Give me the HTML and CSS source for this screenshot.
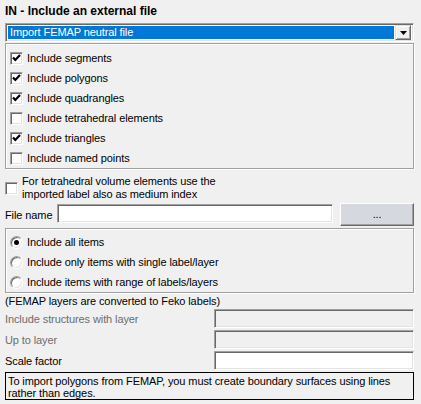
FILE: index.html
```html
<!DOCTYPE html>
<html>
<head>
<meta charset="utf-8">
<link rel="stylesheet" href="styles.css">
</head>
<body>
<div class="page">
  <div class="title">IN - Include an external file</div>
  <div class="combo">
    <div class="combo-value">Import FEMAP neutral file</div>
    <div class="combo-btn"><svg width="7" height="4" viewBox="0 0 7 4"><path d="M0 0h7L3.5 4z" fill="#000"/></svg></div>
  </div>
  <div class="group group-checks">
    <div class="row"><span class="cb"><svg width="11" height="11" viewBox="0 0 11 11"><path d="M2 4.5L4.3 7L9 2" fill="none" stroke="#000" stroke-width="2.2"/></svg></span><span>Include segments</span></div>
    <div class="row"><span class="cb"><svg width="11" height="11" viewBox="0 0 11 11"><path d="M2 4.5L4.3 7L9 2" fill="none" stroke="#000" stroke-width="2.2"/></svg></span><span>Include polygons</span></div>
    <div class="row"><span class="cb"><svg width="11" height="11" viewBox="0 0 11 11"><path d="M2 4.5L4.3 7L9 2" fill="none" stroke="#000" stroke-width="2.2"/></svg></span><span>Include quadrangles</span></div>
    <div class="row"><span class="cb"></span><span>Include tetrahedral elements</span></div>
    <div class="row"><span class="cb"><svg width="11" height="11" viewBox="0 0 11 11"><path d="M2 4.5L4.3 7L9 2" fill="none" stroke="#000" stroke-width="2.2"/></svg></span><span>Include triangles</span></div>
    <div class="row"><span class="cb"></span><span>Include named points</span></div>
  </div>
  <div class="tetra">
    <span class="cb"></span>
    <span class="tetra-text">For tetrahedral volume elements use the<br>imported label also as medium index</span>
  </div>
  <div class="file-row">
    <span class="file-label">File name</span>
    <span class="field file-input"></span>
    <span class="btn">...</span>
  </div>
  <div class="group group-radios">
    <div class="row"><span class="radio on"></span><span>Include all items</span></div>
    <div class="row"><span class="radio"></span><span>Include only items with single label/layer</span></div>
    <div class="row"><span class="radio"></span><span>Include items with range of labels/layers</span></div>
  </div>
  <div class="hint">(FEMAP layers are converted to Feko labels)</div>
  <div class="form-row disabled"><span class="lbl">Include structures with layer</span><span class="field"></span></div>
  <div class="form-row disabled"><span class="lbl">Up to layer</span><span class="field"></span></div>
  <div class="form-row"><span class="lbl">Scale factor</span><span class="field white"></span></div>
  <div class="note">To import polygons from FEMAP, you must create boundary surfaces using lines<br>rather than edges.</div>
</div>
</body>
</html>
```
FILE: styles.css
```css
html, body {
  margin: 0;
  padding: 0;
}
body {
  width: 421px;
  height: 404px;
  overflow: hidden;
  background: #f0f0f0;
  font-family: "Liberation Sans", Arial, sans-serif;
  font-size: 11px;
  letter-spacing: -0.1px;
  color: #000;
}
.page {
  padding: 5px 7px 0 5px;
}
.title {
  font-weight: bold;
  font-size: 12px;
  letter-spacing: 0;
  height: 13px;
  line-height: 13px;
  margin-bottom: 5px;
}
.combo {
  box-sizing: border-box;
  height: 19px;
  display: flex;
  background: #fff;
  border: 1px solid;
  border-color: #a0a0a0 #fff #fff #a0a0a0;
  box-shadow: inset 1px 1px 0 #696969, inset -1px -1px 0 #e3e3e3;
  padding: 2px 2px 2px 2px;
}
.combo-value {
  flex: 1;
  background: #0078d7;
  color: #fff;
  line-height: 13px;
  padding-left: 2px;
  margin-right: 1px;
}
.combo-btn {
  box-sizing: border-box;
  width: 16px;
  margin-top: -1px;
  margin-bottom: -1px;
  background: #f0f0f0;
  border: 1px solid;
  border-color: #e3e3e3 #696969 #696969 #e3e3e3;
  box-shadow: inset 1px 1px 0 #fff, inset -1px -1px 0 #a0a0a0;
  display: flex;
  align-items: center;
  justify-content: center;
}
.group {
  border: 1px solid #a0a0a0;
  box-shadow: inset 1px 1px 0 #fff, 1px 1px 0 #fff;
  margin-top: 1px;
}
.group-checks {
  padding: 4px 0 0 4px;
}
.row {
  height: 20px;
  display: flex;
  align-items: center;
  gap: 4px;
}
.cb {
  box-sizing: border-box;
  width: 13px;
  height: 13px;
  flex: none;
  background: #fff;
  border: 1px solid;
  border-color: #a0a0a0 #fff #fff #a0a0a0;
  box-shadow: inset 1px 1px 0 #696969, inset -1px -1px 0 #e3e3e3;
  display: flex;
  align-items: center;
  justify-content: center;
}
.cb svg {
  display: block;
}
.tetra {
  margin-top: 6px;
  display: flex;
  align-items: center;
  gap: 4px;
  line-height: 13px;
}
.file-row {
  margin-top: 2px;
  height: 23px;
  display: flex;
  align-items: center;
}
.file-label {
  width: 52px;
}
.field {
  box-sizing: border-box;
  display: block;
  height: 19px;
  background: #f0f0f0;
  border: 1px solid;
  border-color: #a0a0a0 #fff #fff #a0a0a0;
  box-shadow: inset 1px 1px 0 #696969, inset -1px -1px 0 #e3e3e3;
}
.field.white {
  background: #fff;
}
.file-input {
  width: 277px;
  background: #fff;
  margin-top: -3px;
}
.btn {
  box-sizing: border-box;
  margin-left: 7px;
  width: 74px;
  height: 23px;
  background: #d6d8e0;
  border: 1px solid;
  border-color: #fff #696969 #696969 #fff;
  box-shadow: inset -1px -1px 0 #a0a0a0;
  display: flex;
  align-items: center;
  justify-content: center;
  line-height: 13px;
}
.group-radios {
  margin-top: 2px;
  padding: 3px 0 0 4px;
}
.radio {
  box-sizing: border-box;
  position: relative;
  width: 13px;
  height: 13px;
  flex: none;
  border-radius: 50%;
  background: #fff;
  border: 1px solid;
  border-color: #a0a0a0 #fff #fff #a0a0a0;
  box-shadow: inset 1px 1px 0 #696969, inset -1px -1px 0 #e3e3e3;
}
.radio.on::after {
  content: "";
  position: absolute;
  left: 3px;
  top: 3px;
  width: 5px;
  height: 5px;
  border-radius: 50%;
  background: #000;
}
.hint {
  margin-top: 2px;
  line-height: 13px;
}
.hint + .form-row {
  margin-top: 1px;
}
.form-row {
  height: 21px;
  display: flex;
  align-items: flex-start;
}
.lbl {
  width: 209px;
  line-height: 21px;
}
.form-row.disabled .lbl {
  color: #6d6d6d;
}
.form-row .field {
  flex: 1;
}
.note {
  border: 1px solid #000;
  padding: 2px 2px 0 2px;
  line-height: 12px;
  height: 24px;
}
```
